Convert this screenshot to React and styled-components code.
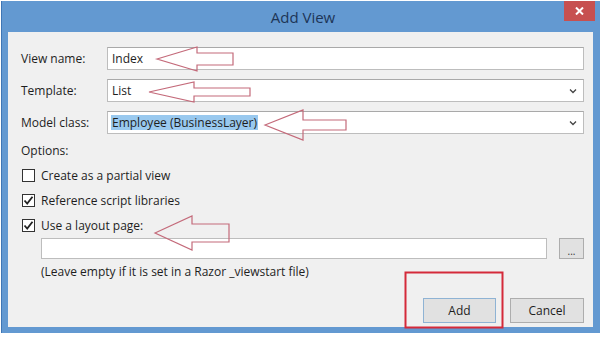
import styled, { createGlobalStyle } from 'styled-components';

const GlobalStyle = createGlobalStyle`
  html, body {
    margin: 0;
    padding: 0;
    background: #ffffff;
  }
  body {
    font-family: "Open Sans", "Noto Sans", "Liberation Sans", sans-serif;
    font-size: 12px;
    color: #1e1e1e;
  }
`

const Page = styled.div`
  position: relative;
  width: 605px;
  height: 338px;
  padding: 1px;
  box-sizing: border-box;
`
const Window = styled.div`
  width: 599px;
  height: 332px;
  background: #6399d1;
  border-left: 1px solid #3f76b5;
  box-sizing: border-box;
  display: flex;
  flex-direction: column;
`
const TitleBar = styled.div`
  height: 31px;
  display: flex;
  align-items: center;
  justify-content: center;
  position: relative;
`
const Title = styled.span`
  font-size: 15px;
  color: #1d3557;
  margin-left: 4px;
  margin-top: 1px;
`
const CloseButton = styled.div`
  position: absolute;
  right: 5px;
  top: 0;
  width: 31px;
  height: 20px;
  background: #c75050;
  color: #ffffff;
  display: flex;
  align-items: center;
  justify-content: center;
`
const Body = styled.div`
  flex: 1;
  margin: 0 7px 6px 6px;
  background: #f0f0f0;
  padding: 15px 9px 0 13px;
  display: flex;
  flex-direction: column;
`
const FieldRow = styled.div`
  display: grid;
  grid-template-columns: 86px 1fr;
  align-items: center;
  height: 23px;
  margin-bottom: 9px;
`
const Label = styled.label`
  color: #1e1e1e;
`
const Field = styled.div`
  height: 23px;
  box-sizing: border-box;
  background: #ffffff;
  border: 1px solid #bdbdbd;
  border-top-color: #a9a9a9;
  display: flex;
  align-items: center;
  padding: 0 6px 0 3px;
  justify-content: space-between;
`
const Selected = styled.span`
  background: ${p => (p.$selected ? '#99c9ef' : 'transparent')};
  padding: 0 1px;
  line-height: 15px;
`
const Chevron = styled.svg`
  width: 8px;
  height: 6px;
`
const OptionsLabel = styled.div`
  margin-top: -1px;
  margin-bottom: 4px;
  height: 17px;
  line-height: 17px;
`
const CheckRow = styled.div`
  display: flex;
  align-items: center;
  gap: 6px;
  height: 25px;
  padding-left: 1px;
`
const Box = styled.span`
  width: 13px;
  height: 13px;
  box-sizing: border-box;
  border: 1px solid #333333;
  background: #ffffff;
  display: inline-flex;
  align-items: center;
  justify-content: center;
`
const LayoutRow = styled.div`
  display: flex;
  align-items: center;
  gap: 12px;
  padding-left: 20px;
`
const LayoutField = styled.div`
  flex: 1;
  height: 21px;
  box-sizing: border-box;
  background: #ffffff;
  border: 1px solid #bdbdbd;
`
const SmallButton = styled.div`
  width: 25px;
  height: 21px;
  box-sizing: border-box;
  background: #e1e1e1;
  border: 1px solid #adadad;
  display: flex;
  align-items: flex-end;
  justify-content: center;
  font-size: 10px;
  line-height: 14px;
  color: #333333;
`
const Note = styled.div`
  padding-left: 20px;
  margin-top: 4px;
  height: 17px;
  line-height: 17px;
`
const ButtonBar = styled.div`
  display: flex;
  justify-content: flex-end;
  gap: 14px;
  margin-top: 18px;
`
const Button = styled.div`
  width: ${p => p.$w}px;
  height: 25px;
  box-sizing: border-box;
  background: #e1e1e1;
  border: 1px solid ${p => (p.$default ? '#8fb3d4' : '#adadad')};
  display: flex;
  align-items: center;
  justify-content: center;
  color: #1e1e1e;
`
const Overlay = styled.svg`
  position: absolute;
  left: 0;
  top: 0;
  width: 605px;
  height: 338px;
  pointer-events: none;
`

const ChevronIcon = () => (
  <Chevron viewBox="0 0 8 6">
    <path d="M1 1.5 L4 4.5 L7 1.5" fill="none" stroke="#444" strokeWidth="1.3" />
  </Chevron>
)

const Check = () => (
  <svg width="11" height="11" viewBox="0 0 11 11">
    <path d="M1.5 5.5 L4.2 8.5 L9.5 1.8" fill="none" stroke="#222" strokeWidth="1.8" />
  </svg>
)

// arrow: tip x,y ; head base x ; head half height ; shaft half height ; tail x
const arrow = (tx, ty, hx, hh, sh, ex) =>
  `M${tx} ${ty} L${hx} ${ty - hh} L${hx} ${ty - sh} L${ex} ${ty - sh} L${ex} ${ty + sh} L${hx} ${ty + sh} L${hx} ${ty + hh} Z`

const arrows = [
  arrow(157, 59, 197, 12, 6, 233),
  arrow(149, 92, 194, 10, 4, 250),
  arrow(265, 125, 303, 15, 5, 346),
  arrow(155, 233, 192, 17, 9, 229),
]

const App = () => {
  return (
    <Page>
      <GlobalStyle />
      <Window>
        <TitleBar>
          <Title>Add View</Title>
          <CloseButton>
            <svg width="9" height="8" viewBox="0 0 9 8">
              <path d="M1 0.5 L8 7.5 M8 0.5 L1 7.5" stroke="#fff" strokeWidth="2" />
            </svg>
          </CloseButton>
        </TitleBar>
        <Body>
          <FieldRow>
            <Label>View name:</Label>
            <Field><Selected>Index</Selected></Field>
          </FieldRow>
          <FieldRow>
            <Label>Template:</Label>
            <Field><Selected>List</Selected><ChevronIcon /></Field>
          </FieldRow>
          <FieldRow>
            <Label>Model class:</Label>
            <Field><Selected $selected>Employee (BusinessLayer)</Selected><ChevronIcon /></Field>
          </FieldRow>
          <OptionsLabel>Options:</OptionsLabel>
          <CheckRow><Box />Create as a partial view</CheckRow>
          <CheckRow><Box><Check /></Box>Reference script libraries</CheckRow>
          <CheckRow><Box><Check /></Box>Use a layout page:</CheckRow>
          <LayoutRow>
            <LayoutField />
            <SmallButton>...</SmallButton>
          </LayoutRow>
          <Note>(Leave empty if it is set in a Razor _viewstart file)</Note>
          <ButtonBar>
            <Button $w={73} $default>Add</Button>
            <Button $w={74}>Cancel</Button>
          </ButtonBar>
        </Body>
      </Window>
      <Overlay viewBox="0 0 605 338">
        {arrows.map((d, i) => (
          <path key={i} d={d} fill="none" stroke="#c46a7a" strokeWidth="1.2" />
        ))}
        <rect x="405.5" y="272.5" width="97" height="55" fill="none" stroke="#d42a3a" strokeWidth="2" />
      </Overlay>
    </Page>
  );
}

export default App
